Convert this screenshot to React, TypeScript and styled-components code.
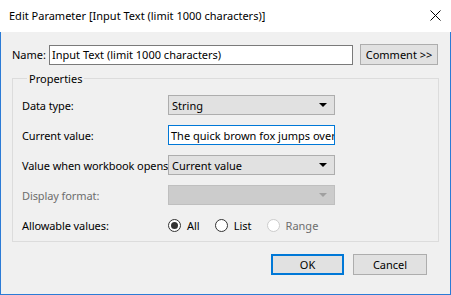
import React from "react";
import styled, { createGlobalStyle } from "styled-components";

const Global = createGlobalStyle`
  html, body { margin: 0; padding: 0; background: #ffffff; }
  * { box-sizing: border-box; }
  body { font-family: "Noto Sans", "Open Sans", sans-serif; font-size: 11px; color: #000; }
`;

const Window = styled.div`
  width: 451px;
  height: 295px;
  display: flex;
  flex-direction: column;
  background: #fff;
`;

const TitleBar = styled.div`
  height: 32px;
  display: flex;
  align-items: center;
  justify-content: space-between;
  padding: 0 10px 2px 9px;
  background: #fff;
`;

const Title = styled.div`
  font-size: 11px;
  color: #000;
  white-space: nowrap;
`;

const CloseIcon = styled.svg`
  width: 11px;
  height: 11px;
`;

const Body = styled.div`
  flex: 1;
  background: #f0f0f0;
  border-left: 1px solid #2b7bd6;
  border-right: 1px solid #2b7bd6;
  border-bottom: 1px solid #2b7bd6;
  padding: 12px 11px 0 11px;
  display: flex;
  flex-direction: column;
`;

const NameRow = styled.div`
  display: flex;
  align-items: center;
  height: 21px;
`;

const NameLabel = styled.span`
  width: 37px;
`;

const TextInput = styled.div<{ $w: number; $focused?: boolean }>`
  width: ${(p) => p.$w}px;
  height: 20px;
  background: #fff;
  border: 1px solid ${(p) => (p.$focused ? "#0078d7" : "#7a7a7a")};
  padding: 0 2px;
  display: flex;
  align-items: center;
  white-space: nowrap;
  overflow: hidden;
`;

const Button = styled.div<{ $w: number; $default?: boolean }>`
  width: ${(p) => p.$w}px;
  height: 21px;
  background: #e1e1e1;
  border: ${(p) => (p.$default ? "2px solid #0078d7" : "1px solid #adadad")};
  display: flex;
  align-items: center;
  justify-content: center;
  white-space: nowrap;
`;

const CommentButton = styled(Button)`
  margin-left: 7px;
`;

const Group = styled.fieldset`
  margin: 6px 0 0 0;
  width: 427px;
  border: 1px solid #dcdcdc;
  padding: 9px 0 6px 9px;
  display: grid;
  grid-template-columns: 146px 167px;
  grid-auto-rows: 20px;
  row-gap: 10px;
  align-items: center;
`;

const Legend = styled.legend`
  padding: 0 2px;
  margin-left: 5px;
  font-size: 11px;
`;

const Label = styled.span<{ $disabled?: boolean }>`
  color: ${(p) => (p.$disabled ? "#6d6d6d" : "#000")};
  white-space: nowrap;
  letter-spacing: -0.1px;
`;

const Select = styled.div<{ $disabled?: boolean }>`
  height: 20px;
  background: ${(p) => (p.$disabled ? "#cccccc" : "#e1e1e1")};
  border: 1px solid ${(p) => (p.$disabled ? "#bfbfbf" : "#adadad")};
  display: flex;
  align-items: center;
  justify-content: space-between;
  padding: 0 7px 0 3px;
`;

const Arrow = styled.span<{ $disabled?: boolean }>`
  width: 0;
  height: 0;
  border-left: 4px solid transparent;
  border-right: 4px solid transparent;
  border-top: 4px solid ${(p) => (p.$disabled ? "#a0a0a0" : "#000")};
`;

const Radios = styled.div`
  display: flex;
  align-items: center;
  white-space: nowrap;
`;

const RadioItem = styled.label<{ $disabled?: boolean }>`
  display: flex;
  align-items: center;
  gap: 6px;
  margin-right: 15px;
  color: ${(p) => (p.$disabled ? "#6d6d6d" : "#000")};
`;

const RadioCircle = styled.span<{ $checked?: boolean; $disabled?: boolean }>`
  width: 13px;
  height: 13px;
  border-radius: 50%;
  border: 1px solid ${(p) => (p.$disabled ? "#cccccc" : "#333")};
  background: #fff;
  display: flex;
  align-items: center;
  justify-content: center;
  &::after {
    content: "";
    width: 7px;
    height: 7px;
    border-radius: 50%;
    background: ${(p) => (p.$checked ? "#333" : "transparent")};
  }
`;

const ButtonRow = styled.div`
  display: flex;
  justify-content: flex-end;
  gap: 9px;
  margin-top: 12px;
  padding-right: 12px;
`;

const Radio = ({ label, checked, disabled }: { label: string; checked?: boolean; disabled?: boolean }) => (
  <RadioItem $disabled={disabled}>
    <RadioCircle $checked={checked} $disabled={disabled} />
    {label}
  </RadioItem>
);

export default function App() {
  return (
    <>
      <Global />
      <Window>
        <TitleBar>
          <Title>Edit Parameter [Input Text (limit 1000 characters)]</Title>
          <CloseIcon viewBox="0 0 11 11">
            <path d="M0.5 0.5 L10.5 10.5 M10.5 0.5 L0.5 10.5" stroke="#000" strokeWidth="1" />
          </CloseIcon>
        </TitleBar>
        <Body>
          <NameRow>
            <NameLabel>Name:</NameLabel>
            <TextInput $w={304}>Input Text (limit 1000 characters)</TextInput>
            <CommentButton $w={78}>Comment &gt;&gt;</CommentButton>
          </NameRow>
          <Group>
            <Legend>Properties</Legend>
            <Label>Data type:</Label>
            <Select>
              String
              <Arrow />
            </Select>
            <Label>Current value:</Label>
            <TextInput $w={167} $focused>
              The quick brown fox jumps over the lazy dog
            </TextInput>
            <Label>Value when workbook opens:</Label>
            <Select>
              Current value
              <Arrow />
            </Select>
            <Label $disabled>Display format:</Label>
            <Select $disabled>
              <span />
              <Arrow $disabled />
            </Select>
            <Label>Allowable values:</Label>
            <Radios>
              <Radio label="All" checked />
              <Radio label="List" />
              <Radio label="Range" disabled />
            </Radios>
          </Group>
          <ButtonRow>
            <Button $w={73} $default>OK</Button>
            <Button $w={74}>Cancel</Button>
          </ButtonRow>
        </Body>
      </Window>
    </>
  );
}
